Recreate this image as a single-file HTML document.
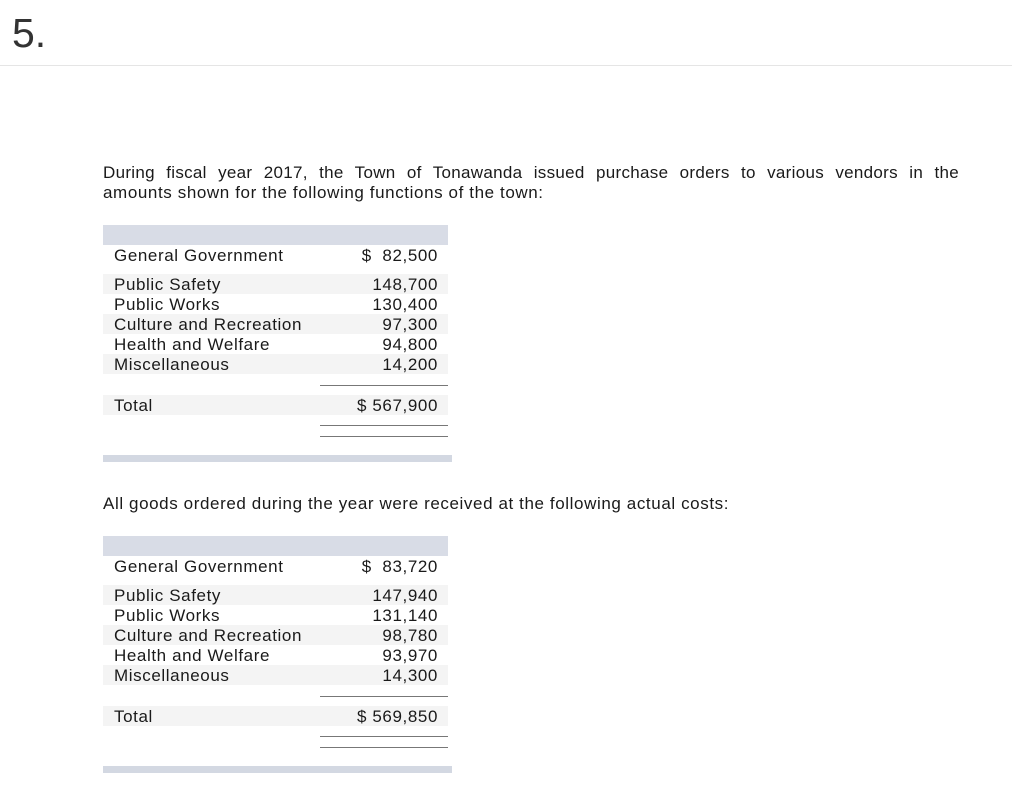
<!DOCTYPE html>
<html><head><style>
body{margin:0;width:1024px;height:792px;background:#fff;font-family:"Liberation Sans",sans-serif;color:#1a1a1a;position:relative;overflow:hidden}
.a{position:absolute}
.num{left:12px;top:10px;font-size:41px;font-weight:300;color:#333}
.hr{left:0;top:65px;width:1012px;height:1px;background:#e5e5e5}
.p{left:103px;width:856px;font-size:17px;letter-spacing:0.6px;line-height:20px;white-space:nowrap}
.j{display:block;text-align:justify;text-align-last:justify;white-space:normal}
.t{left:103px;width:345px;font-size:17px;letter-spacing:0.6px}
.row{position:absolute;left:0;width:345px;height:20px;line-height:21px}
.row span.l{position:absolute;left:11px}
.row span.r{position:absolute;right:10px;letter-spacing:0.6px}
.g{background:#f4f4f4}
.hd{position:absolute;left:0;top:0;width:345px;height:20px;background:#d8dce6}
.ln{position:absolute;left:217px;width:128px;height:1px;background:#777}
.bar{position:absolute;left:0;width:349px;height:7px;background:#d3d8e2}
</style></head><body>
<div class="a num">5.</div>
<div class="a hr"></div>
<div class="a p" style="top:163px"><span class="j" style="letter-spacing:0.3px">During fiscal year 2017, the Town of Tonawanda issued purchase orders to various vendors in the</span>amounts shown for the following functions of the town:</div>

<div class="a t" style="top:225px">
<div class="hd"></div>
<div class="row" style="top:20px"><span class="l">General Government</span><span class="r">$&nbsp;&nbsp;82,500</span></div>
<div class="row g" style="top:49px"><span class="l">Public Safety</span><span class="r">148,700</span></div>
<div class="row" style="top:69px"><span class="l">Public Works</span><span class="r">130,400</span></div>
<div class="row g" style="top:89px"><span class="l">Culture and Recreation</span><span class="r">97,300</span></div>
<div class="row" style="top:109px"><span class="l">Health and Welfare</span><span class="r">94,800</span></div>
<div class="row g" style="top:129px"><span class="l">Miscellaneous</span><span class="r">14,200</span></div>
<div class="ln" style="top:160px"></div>
<div class="row g" style="top:170px"><span class="l">Total</span><span class="r">$ 567,900</span></div>
<div class="ln" style="top:200px"></div>
<div class="ln" style="top:211px"></div>
<div class="bar" style="top:230px"></div>
</div>

<div class="a p" style="top:494px;letter-spacing:0.6px">All goods ordered during the year were received at the following actual costs:</div>

<div class="a t" style="top:536px">
<div class="hd"></div>
<div class="row" style="top:20px"><span class="l">General Government</span><span class="r">$&nbsp;&nbsp;83,720</span></div>
<div class="row g" style="top:49px"><span class="l">Public Safety</span><span class="r">147,940</span></div>
<div class="row" style="top:69px"><span class="l">Public Works</span><span class="r">131,140</span></div>
<div class="row g" style="top:89px"><span class="l">Culture and Recreation</span><span class="r">98,780</span></div>
<div class="row" style="top:109px"><span class="l">Health and Welfare</span><span class="r">93,970</span></div>
<div class="row g" style="top:129px"><span class="l">Miscellaneous</span><span class="r">14,300</span></div>
<div class="ln" style="top:160px"></div>
<div class="row g" style="top:170px"><span class="l">Total</span><span class="r">$ 569,850</span></div>
<div class="ln" style="top:200px"></div>
<div class="ln" style="top:211px"></div>
<div class="bar" style="top:230px"></div>
</div>
</body></html>
